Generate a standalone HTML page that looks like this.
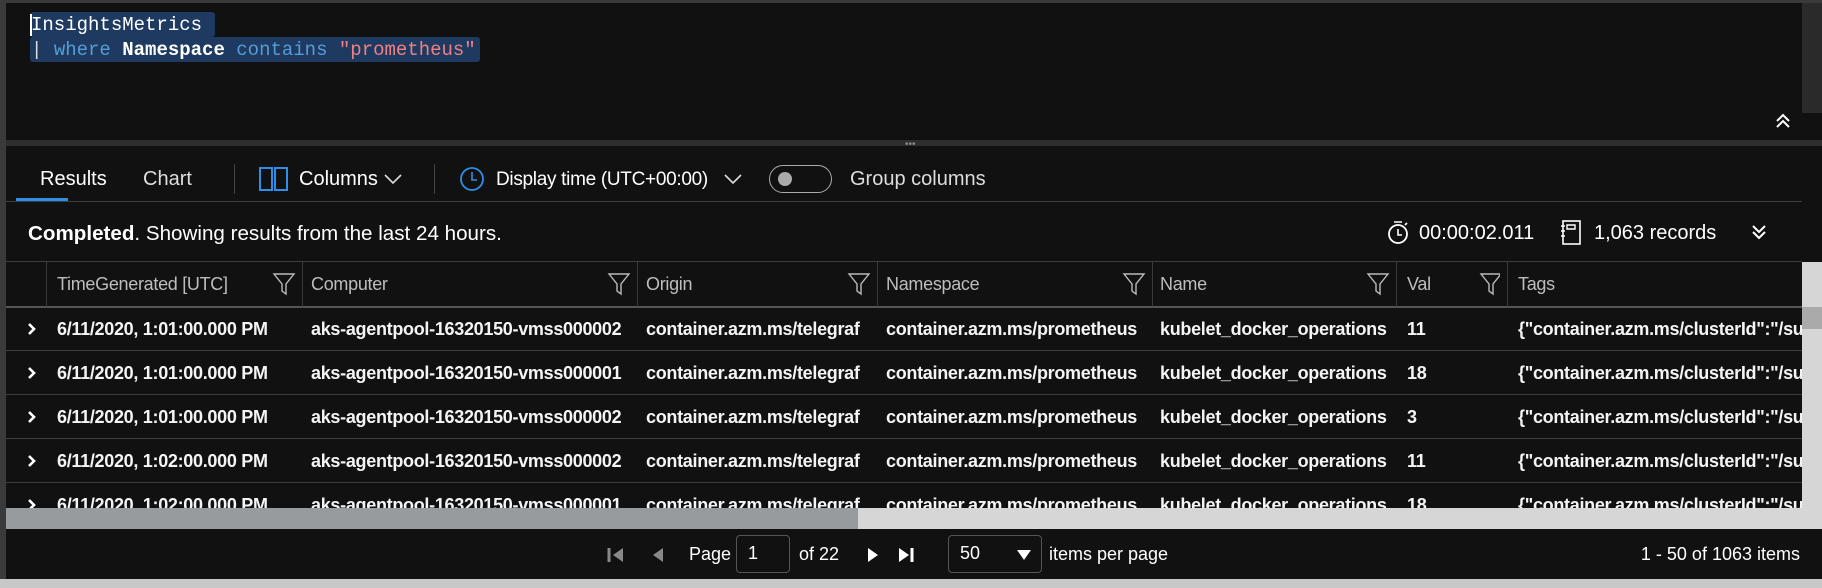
<!DOCTYPE html>
<html><head><meta charset="utf-8"><style>
*{margin:0;padding:0;box-sizing:border-box}
body{width:1822px;height:588px;background:#111;position:relative;overflow:hidden;font-family:"Liberation Sans",sans-serif;color:#fff}
.a{position:absolute;white-space:nowrap}
.mono{font-family:"Liberation Mono",monospace;font-size:19px}
.sel{background:#1e3a60}
.hd{color:#bdbdbd;font-size:18px;top:274px;letter-spacing:-0.3px}
.cell{font-size:18px;font-weight:bold;letter-spacing:-0.3px;color:#f4f4f4}
.vl{position:absolute;width:1px;background:#3a3a3a;top:262px;height:45px}
.hl{position:absolute;left:6px;width:1796px;height:1px;background:#3d3d3d}
</style></head><body>
<div class="a" style="left:0;top:0;width:1822px;height:3px;background:#3a3a3a"></div>
<div class="a" style="left:0;top:0;width:6px;height:588px;background:#3a3a3a"></div>
<div class="a sel" style="left:30px;top:12px;width:185px;height:25px;border-radius:3px"></div>
<div class="a sel" style="left:30px;top:37px;width:450px;height:25px;border-radius:3px"></div>
<div class="a" style="left:30px;top:14px;width:2px;height:22px;background:#fff"></div>
<div class="a mono" style="left:31px;top:14px;color:#fff">InsightsMetrics</div>
<div class="a mono" style="left:31px;top:39px"><span style="color:#ddd">|</span> <span style="color:#569cd6">where</span> <b style="color:#fff">Namespace</b> <span style="color:#569cd6">contains</span> <span style="color:#f08080">"prometheus"</span></div>
<div class="a" style="left:1802px;top:3px;width:20px;height:110px;background:#2a2a2a"></div>
<svg class="a" style="left:1774px;top:112px" width="18" height="18" viewBox="0 0 18 18"><path d="M3 9l6-6 6 6M3 15l6-6 6 6" stroke="#fff" stroke-width="2" fill="none"/></svg>
<div class="a" style="left:6px;top:140px;width:1816px;height:6px;background:#2e2e2e"></div>
<div class="a" style="left:905px;top:139px;color:#888;font-size:10px">•••</div>
<div class="a" style="left:40px;top:168px;font-size:20px;color:#fff">Results</div>
<div class="a" style="left:16px;top:198px;width:52px;height:3px;background:#2f8fe6"></div>
<div class="a" style="left:143px;top:168px;font-size:20px;color:#ddd">Chart</div>
<div class="a" style="left:234px;top:164px;width:1px;height:30px;background:#444"></div>
<svg class="a" style="left:259px;top:167px" width="30" height="24"><rect x="1" y="1" width="12" height="22" fill="none" stroke="#2f8fe6" stroke-width="2"/><rect x="16" y="1" width="12" height="22" fill="none" stroke="#2f8fe6" stroke-width="2"/></svg>
<div class="a" style="left:299px;top:168px;font-size:20px">Columns</div>
<svg class="a" style="left:384px;top:173px" width="18" height="12"><path d="M1 2l8 8 8-8" stroke="#ddd" stroke-width="1.6" fill="none"/></svg>
<div class="a" style="left:434px;top:164px;width:1px;height:30px;background:#444"></div>
<svg class="a" style="left:459px;top:166px" width="26" height="26"><circle cx="13" cy="13" r="11" fill="none" stroke="#2f8fe6" stroke-width="1.8"/><path d="M13 6v8h5" stroke="#2f8fe6" stroke-width="1.6" fill="none"/></svg>
<div class="a" style="left:496px;top:169px;font-size:19px;letter-spacing:-0.3px">Display time (UTC+00:00)</div>
<svg class="a" style="left:724px;top:173px" width="18" height="12"><path d="M1 2l8 8 8-8" stroke="#ddd" stroke-width="1.6" fill="none"/></svg>
<div class="a" style="left:769px;top:165px;width:63px;height:28px;border:1.5px solid #aaa;border-radius:14px"></div>
<div class="a" style="left:778px;top:172px;width:14px;height:14px;border-radius:7px;background:#aaa"></div>
<div class="a" style="left:850px;top:168px;font-size:20px;color:#ddd">Group columns</div>
<div class="a" style="left:6px;top:201px;width:1796px;height:1px;background:#3d3d3d"></div>
<div class="a" style="left:28px;top:222px;font-size:20.6px"><b>Completed</b>. Showing results from the last 24 hours.</div>
<svg class="a" style="left:1386px;top:220px" width="24" height="26"><circle cx="12" cy="14" r="9" fill="none" stroke="#fff" stroke-width="1.8"/><path d="M12 9v6h4M8 2h8M19 5l2-2" stroke="#fff" stroke-width="1.6" fill="none"/></svg>
<div class="a" style="left:1419px;top:222px;font-size:20px">00:00:02.011</div>
<svg class="a" style="left:1560px;top:220px" width="22" height="26"><rect x="3" y="1" width="17" height="23" fill="none" stroke="#fff" stroke-width="1.6"/><path d="M1 6h4M1 11h4M1 16h4M7 5h8v4h-8z" stroke="#fff" stroke-width="1.4" fill="none"/></svg>
<div class="a" style="left:1594px;top:222px;font-size:20px">1,063 records</div>
<svg class="a" style="left:1750px;top:223px" width="18" height="18"><path d="M3 3l6 6 6-6M3 9l6 6 6-6" stroke="#fff" stroke-width="2" fill="none"/></svg>
<div class="a" style="left:6px;top:261px;width:1796px;height:1px;background:#3d3d3d"></div>
<div class="a" style="left:6px;top:306px;width:1796px;height:2px;background:#555"></div>
<div class="vl" style="left:46px"></div><div class="vl" style="left:302px"></div><div class="vl" style="left:637px"></div><div class="vl" style="left:877px"></div><div class="vl" style="left:1152px"></div><div class="vl" style="left:1396px"></div><div class="vl" style="left:1507px"></div>
<div class="a hd" style="left:57px">TimeGenerated [UTC]</div>
<div class="a hd" style="left:311px">Computer</div>
<div class="a hd" style="left:646px">Origin</div>
<div class="a hd" style="left:886px">Namespace</div>
<div class="a hd" style="left:1160px">Name</div>
<div class="a hd" style="left:1407px">Val</div>
<div class="a hd" style="left:1518px">Tags</div>
<svg class="a" style="left:0;top:272px" width="1500" height="24" fill="none" stroke="#bbb" stroke-width="1.4">
<path d="M274 2h20l-8 10v10l-4-3v-7z"/><path d="M609 2h20l-8 10v10l-4-3v-7z"/><path d="M849 2h20l-8 10v10l-4-3v-7z"/><path d="M1124 2h20l-8 10v10l-4-3v-7z"/><path d="M1368 2h20l-8 10v10l-4-3v-7z"/><path d="M1481 2h20l-8 10v10l-4-3v-7z"/></svg>
<div class="hl" style="top:350px"></div><div class="hl" style="top:394px"></div><div class="hl" style="top:438px"></div><div class="hl" style="top:482px"></div>
<div class="a" style="left:6px;top:307px;width:1796px;height:201px;overflow:hidden">
<div style="position:relative">
<div class="a cell" style="left:51px;top:12px">6/11/2020, 1:01:00.000 PM</div><div class="a cell" style="left:305px;top:12px">aks-agentpool-16320150-vmss000002</div><div class="a cell" style="left:640px;top:12px">container.azm.ms/telegraf</div><div class="a cell" style="left:880px;top:12px">container.azm.ms/prometheus</div><div class="a cell" style="left:1154px;top:12px">kubelet_docker_operations</div><div class="a cell" style="left:1401px;top:12px">11</div><div class="a cell" style="left:1512px;top:12px">{"container.azm.ms/clusterId":"/sub</div>
<div class="a cell" style="left:51px;top:56px">6/11/2020, 1:01:00.000 PM</div><div class="a cell" style="left:305px;top:56px">aks-agentpool-16320150-vmss000001</div><div class="a cell" style="left:640px;top:56px">container.azm.ms/telegraf</div><div class="a cell" style="left:880px;top:56px">container.azm.ms/prometheus</div><div class="a cell" style="left:1154px;top:56px">kubelet_docker_operations</div><div class="a cell" style="left:1401px;top:56px">18</div><div class="a cell" style="left:1512px;top:56px">{"container.azm.ms/clusterId":"/sub</div>
<div class="a cell" style="left:51px;top:100px">6/11/2020, 1:01:00.000 PM</div><div class="a cell" style="left:305px;top:100px">aks-agentpool-16320150-vmss000002</div><div class="a cell" style="left:640px;top:100px">container.azm.ms/telegraf</div><div class="a cell" style="left:880px;top:100px">container.azm.ms/prometheus</div><div class="a cell" style="left:1154px;top:100px">kubelet_docker_operations</div><div class="a cell" style="left:1401px;top:100px">3</div><div class="a cell" style="left:1512px;top:100px">{"container.azm.ms/clusterId":"/sub</div>
<div class="a cell" style="left:51px;top:144px">6/11/2020, 1:02:00.000 PM</div><div class="a cell" style="left:305px;top:144px">aks-agentpool-16320150-vmss000002</div><div class="a cell" style="left:640px;top:144px">container.azm.ms/telegraf</div><div class="a cell" style="left:880px;top:144px">container.azm.ms/prometheus</div><div class="a cell" style="left:1154px;top:144px">kubelet_docker_operations</div><div class="a cell" style="left:1401px;top:144px">11</div><div class="a cell" style="left:1512px;top:144px">{"container.azm.ms/clusterId":"/sub</div>
<div class="a cell" style="left:51px;top:188px">6/11/2020, 1:02:00.000 PM</div><div class="a cell" style="left:305px;top:188px">aks-agentpool-16320150-vmss000001</div><div class="a cell" style="left:640px;top:188px">container.azm.ms/telegraf</div><div class="a cell" style="left:880px;top:188px">container.azm.ms/prometheus</div><div class="a cell" style="left:1154px;top:188px">kubelet_docker_operations</div><div class="a cell" style="left:1401px;top:188px">18</div><div class="a cell" style="left:1512px;top:188px">{"container.azm.ms/clusterId":"/sub</div>
<svg class="a" style="left:20px;top:14px" width="12" height="190" fill="none" stroke="#fff" stroke-width="2.6"><path d="M3 3l5 5-5 5M3 47l5 5-5 5M3 91l5 5-5 5M3 135l5 5-5 5M3 179l5 5-5 5"/></svg>
</div></div>
<div class="a" style="left:1802px;top:262px;width:20px;height:267px;background:#d6d6d6"></div>
<div class="a" style="left:1802px;top:307px;width:20px;height:22px;background:#aaa"></div>
<div class="a" style="left:6px;top:508px;width:1796px;height:21px;background:#d6d6d6"></div>
<div class="a" style="left:6px;top:508px;width:852px;height:21px;background:#989b9e"></div>
<svg class="a" style="left:607px;top:545px" width="320" height="20"><path d="M2 3v14" stroke="#888" stroke-width="3"/><path d="M16 3l-10 7 10 7z" fill="#888"/><path d="M56 3l-10 7 10 7z" fill="#888"/><path d="M261 3l10 7-10 7z" fill="#fff"/><path d="M292 3l10 7-10 7z" fill="#fff"/><path d="M305 3v14" stroke="#fff" stroke-width="3"/></svg>
<div class="a" style="left:689px;top:544px;font-size:18px">Page</div>
<div class="a" style="left:736px;top:535px;width:54px;height:38px;border:1px solid #555;border-radius:4px"></div>
<div class="a" style="left:748px;top:543px;font-size:18px">1</div>
<div class="a" style="left:799px;top:544px;font-size:18px">of 22</div>
<div class="a" style="left:948px;top:535px;width:94px;height:38px;border:1px solid #555;border-radius:4px"></div>
<div class="a" style="left:960px;top:543px;font-size:18px">50</div>
<svg class="a" style="left:1017px;top:550px" width="14" height="10"><path d="M0 0h14l-7 10z" fill="#fff"/></svg>
<div class="a" style="left:1049px;top:544px;font-size:18px">items per page</div>
<div class="a" style="right:22px;top:544px;font-size:18px">1 - 50 of 1063 items</div>
<div class="a" style="left:0;top:579px;width:1822px;height:9px;background:#c8c8c8"></div>
</body></html>
